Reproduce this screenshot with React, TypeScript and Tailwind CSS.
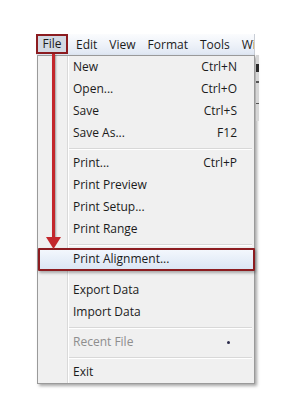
import React from "react";

type Item =
  | { kind: "item"; label: string; shortcut?: string; disabled?: boolean; dot?: boolean; highlight?: boolean }
  | { kind: "sep"; hidden?: boolean };

const items: Item[] = [
  { kind: "item", label: "New", shortcut: "Ctrl+N" },
  { kind: "item", label: "Open...", shortcut: "Ctrl+O" },
  { kind: "item", label: "Save", shortcut: "Ctrl+S" },
  { kind: "item", label: "Save As...", shortcut: "F12" },
  { kind: "sep" },
  { kind: "item", label: "Print...", shortcut: "Ctrl+P" },
  { kind: "item", label: "Print Preview" },
  { kind: "item", label: "Print Setup..." },
  { kind: "item", label: "Print Range" },
  { kind: "sep" },
  { kind: "item", label: "Print Alignment...", highlight: true },
  { kind: "sep", hidden: true },
  { kind: "item", label: "Export Data" },
  { kind: "item", label: "Import Data" },
  { kind: "sep" },
  { kind: "item", label: "Recent File", disabled: true, dot: true },
  { kind: "sep" },
  { kind: "item", label: "Exit" },
];

const menus = ["Edit", "View", "Format", "Tools", "Wi"];

export default function App() {
  return (
    <div
      className="w-[301px] h-[399px] bg-white overflow-hidden text-[12px] text-[#1b1b1b]"
      style={{ fontFamily: '"Open Sans", "Noto Sans", sans-serif' }}
    >
      <div className="relative pt-[34px] pl-[36px]">
        {/* menu bar */}
        <div className="w-[219px] h-[21px] flex items-stretch overflow-hidden bg-gradient-to-b from-[#fbfcfe] via-[#eef2f9] to-[#dfe7f3] border-r border-[#c9ced6]">
          <div className="w-[32px] h-[20px] shrink-0 flex items-center justify-center border-2 border-[#8c1c20] bg-[#d3d9e3]">
            File
          </div>
          <div className="flex items-stretch pl-[2px]">
            {menus.map((m) => (
              <div key={m} className="flex items-center px-[6px] whitespace-nowrap">
                {m}
              </div>
            ))}
          </div>
        </div>

        {/* dropdown */}
        <div className="relative ml-[1px] w-[218px] flex border border-[#9a9a9a] bg-[#f0f0f0] shadow-[2px_2px_3px_rgba(0,0,0,0.35)]">
          <div className="w-[30px] shrink-0 border-r border-[#d9d9d9] shadow-[1px_0_0_#ffffff]" />
          <div className="flex-1 flex flex-col pl-[1px]">
            {items.map((it, idx) =>
              it.kind === "sep" ? (
                <div key={idx} className={(it.hidden ? "h-[9px]" : "h-[8px]") + " flex items-center pr-[2px]"}>
                  {!it.hidden && <div className="w-full h-px bg-[#d8d8d8] shadow-[0_1px_0_#ffffff]" />}
                </div>
              ) : (
                <div key={idx} className="relative h-[22px] flex items-center pl-[4px] pr-[17px]">
                  {it.highlight && (
                    <div className="absolute left-[-31px] right-[-1px] top-0 h-[23px] border-2 border-[#8c1c20] rounded-[1px] bg-gradient-to-b from-[#f3f7fd] to-[#dbe6f4] shadow-[1px_2px_3px_rgba(0,0,0,0.3)]" />
                  )}
                  <span className={"relative flex-1 " + (it.disabled ? "text-[#8e8e8e]" : "")}>{it.label}</span>
                  {it.shortcut && <span className="relative">{it.shortcut}</span>}
                  {it.dot && <span className="relative w-[3px] h-[3px] rounded-full bg-[#2a2a4a] mr-[7px]" />}
                </div>
              )
            )}
          </div>
        </div>

        {/* fragment of the window behind the menu */}
        <div className="absolute left-[256px] top-[55px] w-[3px] h-[66px] bg-[#d6d6d6]">
          <div className="mt-[9px] w-[3px] h-[8px] bg-[#2a2a2a]" />
          <div className="mt-[9px] w-[3px] h-[2px] bg-[#555555]" />
          <div className="mt-[20px] w-[3px] h-[1px] bg-[#555555]" />
        </div>

        {/* red arrow annotation */}
        <div className="absolute left-[52px] top-[54px] w-[3px] h-[186px] bg-[#c3272c] shadow-[1px_1px_2px_rgba(0,0,0,0.35)]" />
        <svg className="absolute left-[46px] top-[237px]" width="15" height="12" viewBox="0 0 15 12">
          <polygon points="0,0 15,0 7.5,12" fill="#c3272c" />
        </svg>
      </div>
    </div>
  );
}
